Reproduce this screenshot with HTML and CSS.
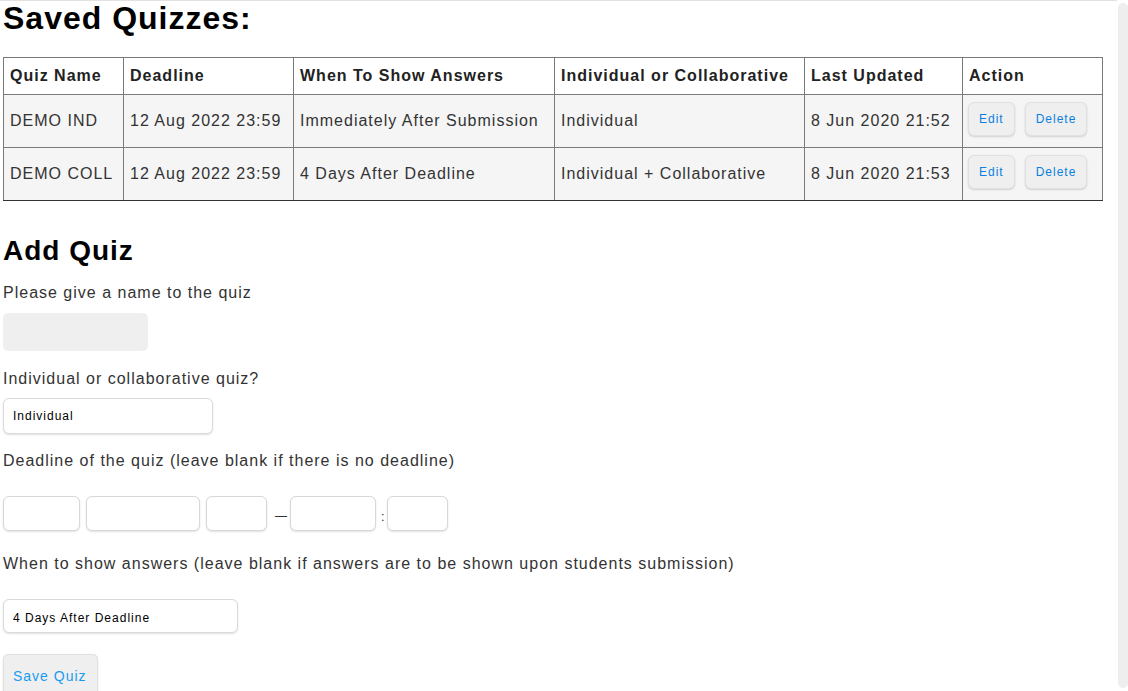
FILE: index.html
```html
<!DOCTYPE html>
<html lang="en">
<head>
<meta charset="utf-8">
<title>Saved Quizzes</title>
<link rel="stylesheet" href="styles.css">
</head>
<body>
<div class="page">
  <main class="main">
    <h1 class="title">Saved Quizzes:</h1>
    <table class="quiz-table">
      <colgroup>
        <col class="c1"><col class="c2"><col class="c3"><col class="c4"><col class="c5"><col class="c6">
      </colgroup>
      <thead>
        <tr>
          <th>Quiz Name</th>
          <th>Deadline</th>
          <th>When To Show Answers</th>
          <th>Individual or Collaborative</th>
          <th>Last Updated</th>
          <th>Action</th>
        </tr>
      </thead>
      <tbody>
        <tr>
          <td>DEMO IND</td>
          <td>12 Aug 2022 23:59</td>
          <td>Immediately After Submission</td>
          <td>Individual</td>
          <td>8 Jun 2020 21:52</td>
          <td><div class="actions"><button class="btn">Edit</button><button class="btn">Delete</button></div></td>
        </tr>
        <tr>
          <td>DEMO COLL</td>
          <td>12 Aug 2022 23:59</td>
          <td>4 Days After Deadline</td>
          <td>Individual + Collaborative</td>
          <td>8 Jun 2020 21:53</td>
          <td><div class="actions"><button class="btn">Edit</button><button class="btn">Delete</button></div></td>
        </tr>
      </tbody>
    </table>

    <h2 class="subtitle">Add Quiz</h2>
    <form class="quiz-form">
      <label class="label l1">Please give a name to the quiz</label>
      <input class="name-input" type="text">

      <label class="label l2">Individual or collaborative quiz?</label>
      <div class="select s1">Individual</div>

      <label class="label l3">Deadline of the quiz (leave blank if there is no deadline)</label>
      <div class="date-row">
        <input class="box w77" type="text">
        <input class="box w114" type="text">
        <input class="box w61" type="text">
        <span class="dash">—</span>
        <input class="box w86" type="text">
        <span class="colon">:</span>
        <input class="box w61" type="text">
      </div>

      <label class="label l4">When to show answers (leave blank if answers are to be shown upon students submission)</label>
      <div class="select s2">4 Days After Deadline</div>

      <div class="save-row"><button type="button" class="save">Save Quiz</button></div>
    </form>
  </main>
  <div class="track"></div>
</div>
</body>
</html>
```
FILE: styles.css
```css
html, body {
  margin: 0;
  padding: 0;
  overflow: hidden;
  background: #fff;
}
body {
  font-family: "Liberation Sans", Arial, sans-serif;
  letter-spacing: 1px;
  color: #333;
}
.page {
  display: flex;
  height: 691px;
  overflow: hidden;
}
.main {
  flex: 1;
  border-top: 1px solid #e2e2e2;
  padding: 0 15px 0 3px;
  min-width: 0;
}
.track {
  width: 10px;
  margin: 3px 0 3px 1px;
  background: #eeeeee;
  border-radius: 5px;
}
.title {
  margin: 0 0 22px 0;
  font-size: 32px;
  line-height: 34px;
  font-weight: bold;
  color: #000;
}
.quiz-table {
  border-collapse: collapse;
  table-layout: fixed;
  width: 1099px;
  font-size: 16px;
}
.c1 { width: 120px; }
.c2 { width: 170px; }
.c3 { width: 261px; }
.c4 { width: 250px; }
.c5 { width: 158px; }
.c6 { width: 140px; }
.quiz-table th,
.quiz-table td {
  border: 1px solid #7a7a7a;
  padding: 0 6px;
  text-align: left;
  vertical-align: middle;
  white-space: nowrap;
}
.quiz-table th {
  height: 36px;
  font-weight: bold;
  color: #222;
  background: #fff;
}
.quiz-table td {
  height: 52px;
  background: #f5f5f5;
  color: #333;
}
.quiz-table tbody tr:last-child td {
  border-bottom-color: #333;
}
.actions {
  display: flex;
  gap: 10px;
  margin-left: -1px;
  padding-bottom: 5px;
}
.btn {
  font-family: "Liberation Sans", Arial, sans-serif;
  font-size: 12px;
  letter-spacing: 1px;
  color: #0a7fe0;
  background: #efefef;
  border: 1px solid #e0e0e0;
  border-radius: 6px;
  box-shadow: 0 1px 2px rgba(0,0,0,0.15);
  height: 34px;
  padding: 0 10px;
}
.subtitle {
  margin: 36px 0 0 0;
  font-size: 28px;
  line-height: 28px;
  font-weight: bold;
  color: #000;
}
.quiz-form {
  display: flex;
  flex-direction: column;
  align-items: flex-start;
}
.label {
  display: block;
  font-size: 16px;
  line-height: 20px;
  color: #333;
}
.l1 { margin-top: 18px; }
.name-input {
  margin-top: 10px;
  width: 145px;
  height: 38px;
  box-sizing: border-box;
  border: none;
  border-radius: 5px;
  background: #efefef;
}
.l2 { margin-top: 18px; }
.select {
  box-sizing: border-box;
  height: 36px;
  border: 1px solid #dadada;
  border-radius: 6px;
  box-shadow: 0 1px 2px rgba(0,0,0,0.12);
  background: #fff;
  color: #000;
  font-size: 12px;
  line-height: 34px;
  padding: 0 9px;
}
.s1 { margin-top: 9px; width: 210px; }
.l3 { margin-top: 17px; }
.date-row {
  margin-top: 25px;
  display: flex;
  align-items: center;
  gap: 6px;
}
.box {
  box-sizing: border-box;
  height: 35px;
  border: 1px solid #d8d8d8;
  border-radius: 6px;
  box-shadow: 0 1px 2px rgba(0,0,0,0.12);
  background: #fff;
  margin: 0;
}
.w77 { width: 77px; }
.w114 { width: 114px; }
.w61 { width: 61px; }
.w86 { width: 86px; }
.dash {
  font-size: 12px;
  color: #333;
  letter-spacing: 0;
  margin: 4px -3px 0 2px;
}
.colon {
  font-size: 13px;
  color: #333;
  letter-spacing: 0;
  margin: 6px -4px 0 -1px;
}
.l4 { margin-top: 23px; }
.s2 { margin-top: 25px; width: 235px; height: 34px; line-height: 36px; }
.save-row {
  margin-top: 21px;
}
.save {
  font-family: "Liberation Sans", Arial, sans-serif;
  font-size: 14px;
  letter-spacing: 1px;
  color: #1a9bf2;
  background: #efefef;
  border: 1px solid #e0e0e0;
  border-radius: 5px;
  box-shadow: 0 1px 2px rgba(0,0,0,0.12);
  padding: 13px 10px 10px 9px;
  line-height: 17px;
}
```
